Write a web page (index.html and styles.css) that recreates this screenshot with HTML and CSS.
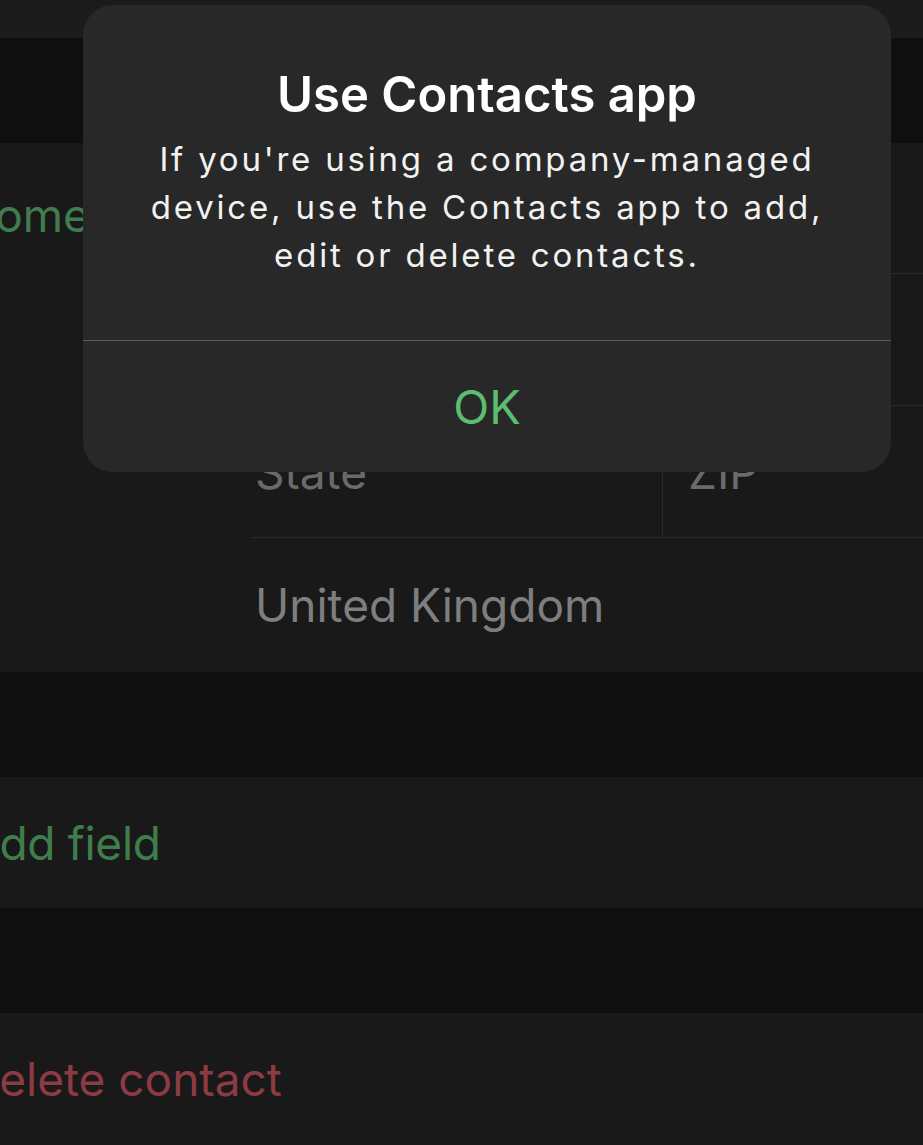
FILE: index.html
```html
<!DOCTYPE html>
<html lang="en">
<head>
  <meta charset="UTF-8">
  <meta name="viewport" content="width=device-width, initial-scale=1.0">
  <title>Edit contact</title>
  <link rel="stylesheet" href="styles.css">
</head>
<body>
  <div class="screen">
    <div class="strip"></div>
    <div class="gap"></div>

    <section class="card address">
      <div class="label-col">
        <span class="label">home</span>
      </div>
      <div class="fields">
        <div class="field"></div>
        <div class="field"></div>
        <div class="field split">
          <span class="cell placeholder">State</span>
          <span class="cell cell-zip placeholder">ZIP</span>
        </div>
        <div class="field last">United Kingdom</div>
      </div>
    </section>

    <div class="gap"></div>

    <section class="card">
      <div class="action add">Add field</div>
    </section>

    <div class="gap"></div>

    <section class="card">
      <div class="action delete">Delete contact</div>
    </section>
  </div>

  <div class="alert">
    <div class="alert-body">
      <h2>Use Contacts app</h2>
      <p>If you're using a company-managed<br>device, use the Contacts app to add,<br>edit or delete contacts.</p>
    </div>
    <button class="alert-btn">OK</button>
  </div>
</body>
</html>
```

FILE: styles.css
```css
body {
  margin: 0;
  width: 923px;
  height: 1145px;
  overflow: hidden;
  position: relative;
  background-color: #0f0f10;
  font-family: Inter, "Noto Sans", sans-serif;
}

.screen {
  margin-left: -32px;
  width: 955px;
}

.strip {
  height: 38px;
  background-color: #1b1b1c;
}

.gap {
  height: 105px;
}

.card {
  background-color: #19191a;
  font-size: 46px;
}

.address {
  display: flex;
}

.label-col {
  width: 284px;
  padding-top: 44px;
}

.label {
  color: #3f7d4c;
}

.fields {
  flex: 1;
}

.field {
  height: 131px;
  border-top: 1px solid #2a2a2b;
  display: flex;
  align-items: center;
  padding-left: 3px;
  color: #7e7e7f;
}

.field:first-child {
  height: 130px;
  border-top: none;
}

.field.last {
  height: 134px;
}

.split {
  padding-left: 0;
  align-items: stretch;
}

.cell {
  display: flex;
  align-items: center;
  padding-left: 3px;
}

.cell:first-child {
  width: 407px;
  border-right: 1px solid #2a2a2b;
}

.cell-zip {
  padding-left: 25px;
}

.placeholder {
  color: #6a6a6b;
}

.action {
  height: 131px;
  display: flex;
  align-items: center;
}

.add {
  color: #3f7d4c;
  letter-spacing: -0.3px;
}

.delete {
  height: 132px;
  color: #8c3b45;
  margin-left: -2px;
}

/* alert */
.alert {
  position: absolute;
  left: 83px;
  top: 5px;
  width: 808px;
  border-radius: 30px;
  background-color: #282828;
  text-align: center;
  overflow: hidden;
}

.alert-body {
  padding: 62px 30px 61px;
}

.alert h2 {
  margin: 0;
  font-size: 49px;
  line-height: 56px;
  font-weight: 600;
  color: #fff;
}

.alert p {
  margin: 12px 0 0;
  font-size: 33px;
  line-height: 48px;
  letter-spacing: 2.8px;
  color: #f2f2f2;
}

.alert-btn {
  display: block;
  width: 100%;
  height: 132px;
  border: none;
  border-top: 1px solid #5c5c5e;
  background: none;
  font-family: inherit;
  font-size: 47px;
  color: #5cbd6e;
  padding: 0;
}
```
